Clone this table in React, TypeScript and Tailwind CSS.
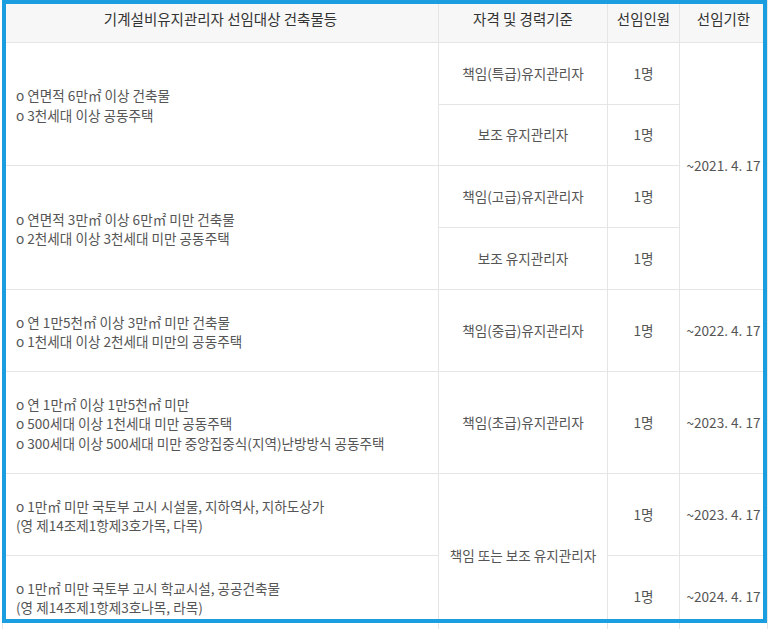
const font = { fontFamily: '"Noto Sans CJK KR", "Noto Sans", sans-serif' };

const line = 'border border-[#e5e5e5]';
const head = `${line} bg-[#f7f7f7] text-[14.5px] text-[#333] font-normal text-center align-middle pb-[6px]`;
const left = `${line} text-left align-middle pl-[13px] pt-[3px]`;
const mid = `${line} text-center align-middle`;

function Lines({ items }: { items: string[] }) {
  return (
    <>
      {items.map((t) => (
        <div key={t}>{t}</div>
      ))}
    </>
  );
}

export default function App() {
  return (
    <div className="relative w-[773px] h-[629px] overflow-hidden bg-white" style={font}>
      <table className="table-fixed border-collapse ml-[2px] w-[765px] text-[13.6px] leading-[19.5px] text-[#555]">
        <colgroup>
          <col className="w-[436px]" />
          <col className="w-[169px]" />
          <col className="w-[72px]" />
          <col className="w-[88px]" />
        </colgroup>
        <thead>
          <tr className="h-[42px]">
            <th className={head}>기계설비유지관리자 선임대상 건축물등</th>
            <th className={head}>자격 및 경력기준</th>
            <th className={head}>선임인원</th>
            <th className={head}>선임기한</th>
          </tr>
        </thead>
        <tbody>
          <tr className="h-[62px]">
            <td rowSpan={2} className={left}>
              <Lines items={['o 연면적 6만㎡ 이상 건축물', 'o 3천세대 이상 공동주택']} />
            </td>
            <td className={mid}>책임(특급)유지관리자</td>
            <td className={mid}>1명</td>
            <td rowSpan={4} className={mid}>~2021. 4. 17</td>
          </tr>
          <tr className="h-[61px]">
            <td className={mid}>보조 유지관리자</td>
            <td className={mid}>1명</td>
          </tr>
          <tr className="h-[62px]">
            <td rowSpan={2} className={left}>
              <Lines items={['o 연면적 3만㎡ 이상 6만㎡ 미만 건축물', 'o 2천세대 이상 3천세대 미만 공동주택']} />
            </td>
            <td className={mid}>책임(고급)유지관리자</td>
            <td className={mid}>1명</td>
          </tr>
          <tr className="h-[62px]">
            <td className={mid}>보조 유지관리자</td>
            <td className={mid}>1명</td>
          </tr>
          <tr className="h-[82px]">
            <td className={left}>
              <Lines items={['o 연 1만5천㎡ 이상 3만㎡ 미만 건축물', 'o 1천세대 이상 2천세대 미만의 공동주택']} />
            </td>
            <td className={mid}>책임(중급)유지관리자</td>
            <td className={mid}>1명</td>
            <td className={mid}>~2022. 4. 17</td>
          </tr>
          <tr className="h-[102px]">
            <td className={left}>
              <Lines
                items={[
                  'o 연 1만㎡ 이상 1만5천㎡ 미만',
                  'o 500세대 이상 1천세대 미만 공동주택',
                  'o 300세대 이상 500세대 미만 중앙집중식(지역)난방방식 공동주택',
                ]}
              />
            </td>
            <td className={mid}>책임(초급)유지관리자</td>
            <td className={mid}>1명</td>
            <td className={mid}>~2023. 4. 17</td>
          </tr>
          <tr className="h-[82px]">
            <td className={left}>
              <Lines items={['o 1만㎡ 미만 국토부 고시 시설물, 지하역사, 지하도상가', '(영 제14조제1항제3호가목, 다목)']} />
            </td>
            <td rowSpan={2} className={mid}>책임 또는 보조 유지관리자</td>
            <td className={mid}>1명</td>
            <td className={mid}>~2023. 4. 17</td>
          </tr>
          <tr className="h-[82px]">
            <td className={left}>
              <Lines items={['o 1만㎡ 미만 국토부 고시 학교시설, 공공건축물', '(영 제14조제1항제3호나목, 라목)']} />
            </td>
            <td className={mid}>1명</td>
            <td className={mid}>~2024. 4. 17</td>
          </tr>
        </tbody>
      </table>
      {/* highlight frame drawn over the table */}
      <div className="pointer-events-none absolute left-[2px] top-0 w-[765px] h-[623px] border-4 border-[#1b9ee0]" />
    </div>
  );
}
